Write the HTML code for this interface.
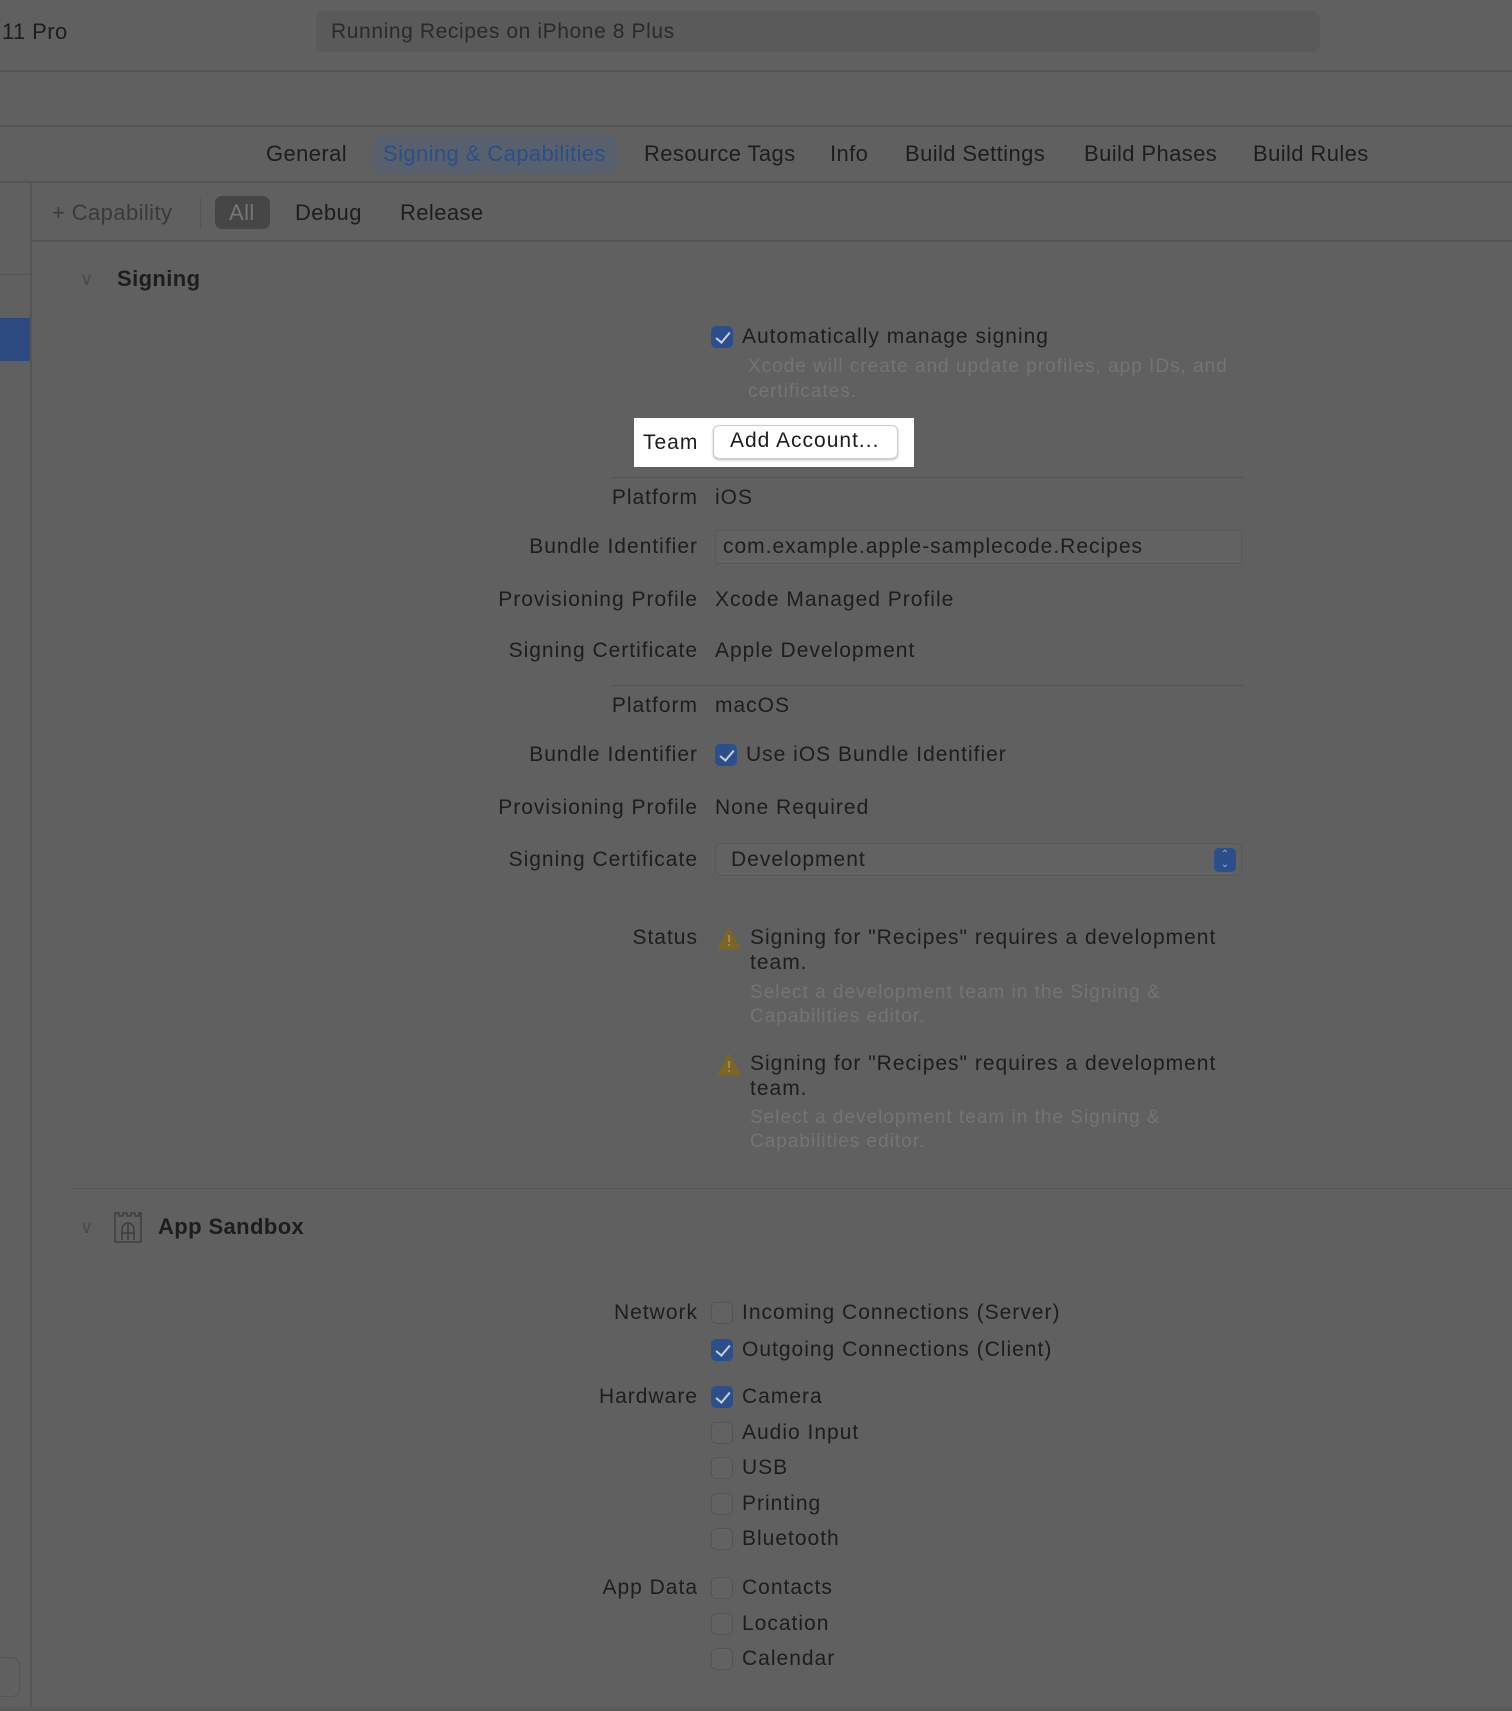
<!DOCTYPE html>
<html><head><meta charset="utf-8"><style>
*{margin:0;padding:0;box-sizing:border-box}
body{width:1512px;height:1711px;background:#606060;font-family:"Liberation Sans",sans-serif;color:#1d1d1d;position:relative;overflow:hidden;font-size:21px;letter-spacing:1px}
.a{position:absolute;white-space:nowrap;line-height:26px}
.r{position:absolute;white-space:nowrap;line-height:26px;right:814px;text-align:right}
.l{position:absolute;background:#555}
.cb{position:absolute;width:22px;height:22px;border-radius:5px;border:1px solid #555;background:#626262}
.cb.on{background:#2c4f8c;border-color:#2c4f8c}
.cb.on::after{content:"";position:absolute;left:7px;top:2px;width:6px;height:12px;border:solid #ccd;border-width:0 2.5px 2.5px 0;transform:rotate(40deg)}
.g{color:#747474;font-size:19px}
.tb{letter-spacing:0.4px;font-size:22px}
</style></head><body>
<div class="a tb" style="left:2px;top:19px">11 Pro</div>
<div style="position:absolute;left:316px;top:11px;width:1004px;height:41px;background:#5a5a5a;border-radius:8px"></div>
<div class="a" style="left:331px;top:19px;font-size:21px;color:#2a2a2a;letter-spacing:0.6px">Running Recipes on iPhone 8 Plus</div>
<div class="l" style="left:0;top:70px;width:1512px;height:2px"></div>
<div class="l" style="left:0;top:125px;width:1512px;height:2px"></div>
<div style="position:absolute;left:373px;top:135px;width:244px;height:38px;background:#57606c;border-radius:7px"></div>
<div class="a tb" style="left:266px;top:141px">General</div>
<div class="a tb" style="left:383px;top:141px;color:#2c4f87">Signing &amp; Capabilities</div>
<div class="a tb" style="left:644px;top:141px">Resource Tags</div>
<div class="a tb" style="left:830px;top:141px">Info</div>
<div class="a tb" style="left:905px;top:141px">Build Settings</div>
<div class="a tb" style="left:1084px;top:141px">Build Phases</div>
<div class="a tb" style="left:1253px;top:141px">Build Rules</div>
<div class="l" style="left:0;top:181px;width:1512px;height:2px"></div>
<div class="l" style="left:30px;top:182px;width:2px;height:1529px"></div>
<div style="position:absolute;left:0;top:318px;width:30px;height:43px;background:#2c4a80"></div>
<div class="l" style="left:0;top:274px;width:30px;height:1px"></div>
<div style="position:absolute;left:-10px;top:1657px;width:30px;height:40px;border:1px solid #555;border-radius:8px"></div>
<div class="a tb" style="left:52px;top:200px;color:#3a3a3a">+ Capability</div>
<div class="l" style="left:200px;top:198px;width:1px;height:30px"></div>
<div style="position:absolute;left:215px;top:196px;width:55px;height:33px;background:#464646;border-radius:7px"></div>
<div class="a tb" style="left:229px;top:200px;color:#777">All</div>
<div class="a tb" style="left:295px;top:200px">Debug</div>
<div class="a tb" style="left:400px;top:200px">Release</div>
<div class="l" style="left:32px;top:240px;width:1480px;height:2px"></div>
<div class="a" style="left:80px;top:266px;font-size:18px;color:#4a4a4a">&#8744;</div>
<div class="a tb" style="left:117px;top:266px;font-weight:bold">Signing</div>
<div class="cb on" style="left:711px;top:326px"></div>
<div class="a" style="left:742px;top:324px">Automatically manage signing</div>
<div class="a g" style="left:748px;top:354px">Xcode will create and update profiles, app IDs, and</div>
<div class="a g" style="left:748px;top:379px">certificates.</div>
<div style="position:absolute;left:634px;top:418px;width:280px;height:49px;background:#fff"></div>
<div class="a" style="left:643px;top:430px">Team</div>
<div style="position:absolute;left:713px;top:425px;width:185px;height:34px;background:#fff;border:1px solid #ccc;border-radius:6px;box-shadow:0 1px 2px #bbb"></div>
<div class="a" style="left:730px;top:428px">Add Account...</div>
<div class="l" style="left:611px;top:477px;width:633px;height:1px"></div>
<div class="r" style="top:485px">Platform</div><div class="a" style="left:715px;top:485px">iOS</div>
<div class="r" style="top:534px">Bundle Identifier</div>
<div style="position:absolute;left:715px;top:530px;width:527px;height:34px;border:1px solid #585858;background:#626262"></div>
<div class="a" style="left:723px;top:534px">com.example.apple-samplecode.Recipes</div>
<div class="r" style="top:587px">Provisioning Profile</div><div class="a" style="left:715px;top:587px">Xcode Managed Profile</div>
<div class="r" style="top:638px">Signing Certificate</div><div class="a" style="left:715px;top:638px">Apple Development</div>
<div class="l" style="left:611px;top:685px;width:633px;height:1px"></div>
<div class="r" style="top:693px">Platform</div><div class="a" style="left:715px;top:693px">macOS</div>
<div class="r" style="top:742px">Bundle Identifier</div>
<div class="cb on" style="left:715px;top:744px"></div>
<div class="a" style="left:746px;top:742px">Use iOS Bundle Identifier</div>
<div class="r" style="top:795px">Provisioning Profile</div><div class="a" style="left:715px;top:795px">None Required</div>
<div class="r" style="top:847px">Signing Certificate</div>
<div style="position:absolute;left:715px;top:843px;width:527px;height:33px;border:1px solid #585858;border-radius:6px;background:#626262"></div>
<div class="a" style="left:731px;top:847px">Development</div>
<div style="position:absolute;left:1214px;top:848px;width:22px;height:24px;background:#2c4f8c;border-radius:5px;color:#aab;font-size:10px;line-height:10px;text-align:center;padding-top:2px;letter-spacing:0">&#8963;<br>&#8964;</div>
<div class="r" style="top:925px">Status</div>
<svg style="position:absolute;left:718px;top:928px" width="22" height="22" viewBox="0 0 22 22"><path d="M11 1 L21 20 L1 20 Z" fill="#7d6625" stroke="#7d6625" stroke-linejoin="round" stroke-width="2"/><rect x="10" y="7" width="2" height="7" fill="#9a8a5a"/><rect x="10" y="16" width="2" height="2" fill="#9a8a5a"/></svg>
<div class="a" style="left:750px;top:925px">Signing for "Recipes" requires a development</div>
<div class="a" style="left:750px;top:950px">team.</div>
<div class="a g" style="left:750px;top:980px">Select a development team in the Signing &amp;</div>
<div class="a g" style="left:750px;top:1004px">Capabilities editor.</div>
<svg style="position:absolute;left:718px;top:1054px" width="22" height="22" viewBox="0 0 22 22"><path d="M11 1 L21 20 L1 20 Z" fill="#7d6625" stroke="#7d6625" stroke-linejoin="round" stroke-width="2"/><rect x="10" y="7" width="2" height="7" fill="#9a8a5a"/><rect x="10" y="16" width="2" height="2" fill="#9a8a5a"/></svg>
<div class="a" style="left:750px;top:1051px">Signing for "Recipes" requires a development</div>
<div class="a" style="left:750px;top:1076px">team.</div>
<div class="a g" style="left:750px;top:1105px">Select a development team in the Signing &amp;</div>
<div class="a g" style="left:750px;top:1129px">Capabilities editor.</div>
<div class="l" style="left:71px;top:1188px;width:1441px;height:1px"></div>
<div class="a" style="left:80px;top:1214px;font-size:18px;color:#4a4a4a">&#8744;</div>
<svg style="position:absolute;left:113px;top:1211px" width="30" height="32" viewBox="0 0 30 32" fill="none" stroke="#3e3e3e" stroke-width="1.5"><path d="M2 31V2h4v3h4V2h4v3h4V2h4v3h4V2h2v29H2z"/><path d="M9 29V18a6 6 0 0 1 12 0v11M15 13v16M9 22h12"/></svg>
<div class="a tb" style="left:158px;top:1214px;font-weight:bold">App Sandbox</div>
<div class="r" style="top:1300px">Network</div>
<div class="cb" style="left:711px;top:1302px"></div><div class="a" style="left:742px;top:1300px">Incoming Connections (Server)</div>
<div class="cb on" style="left:711px;top:1339px"></div><div class="a" style="left:742px;top:1337px">Outgoing Connections (Client)</div>
<div class="r" style="top:1384px">Hardware</div>
<div class="cb on" style="left:711px;top:1386px"></div><div class="a" style="left:742px;top:1384px">Camera</div>
<div class="cb" style="left:711px;top:1422px"></div><div class="a" style="left:742px;top:1420px">Audio Input</div>
<div class="cb" style="left:711px;top:1457px"></div><div class="a" style="left:742px;top:1455px">USB</div>
<div class="cb" style="left:711px;top:1493px"></div><div class="a" style="left:742px;top:1491px">Printing</div>
<div class="cb" style="left:711px;top:1528px"></div><div class="a" style="left:742px;top:1526px">Bluetooth</div>
<div class="r" style="top:1575px">App Data</div>
<div class="cb" style="left:711px;top:1577px"></div><div class="a" style="left:742px;top:1575px">Contacts</div>
<div class="cb" style="left:711px;top:1613px"></div><div class="a" style="left:742px;top:1611px">Location</div>
<div class="cb" style="left:711px;top:1648px"></div><div class="a" style="left:742px;top:1646px">Calendar</div>
<div class="l" style="left:0;top:1707px;width:1512px;height:4px;background:#5a5a5a"></div>
</body></html>
